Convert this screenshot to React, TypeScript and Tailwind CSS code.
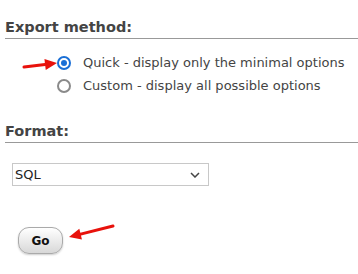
import React from "react";

const Arrow = ({ className, x1, y1, x2, y2 }: { className: string; x1: number; y1: number; x2: number; y2: number }) => {
  const ang = Math.atan2(y2 - y1, x2 - x1);
  const len = 12;
  const w = 5.5;
  const bx = x2 - Math.cos(ang) * len;
  const by = y2 - Math.sin(ang) * len;
  const px = -Math.sin(ang) * w;
  const py = Math.cos(ang) * w;
  return (
    <svg className={className} width="60" height="30" viewBox="0 0 60 30">
      <line x1={x1} y1={y1} x2={bx} y2={by} stroke="#e8120c" strokeWidth="3" strokeLinecap="round" />
      <polygon points={`${x2},${y2} ${bx + px},${by + py} ${bx - px},${by - py}`} fill="#e8120c" />
    </svg>
  );
};

export default function App() {
  return (
    <div className="relative h-[274px] w-[358px] bg-white text-[#444] [font-family:'DejaVu_Sans',sans-serif]">
      <div className="pl-[5px] pt-[18px]">
        <h3 className="border-b border-[#999] pb-[2px] text-[14.5px] font-bold leading-[18px]">Export method:</h3>
        <div className="mt-[17px] flex flex-col gap-[9px] pl-[52px] text-[13px] leading-[14px]">
          <label className="flex items-center gap-[12px]">
            <span className="flex h-[14px] w-[14px] items-center justify-center rounded-full border-2 border-[#1a6fd6]">
              <span className="h-[6px] w-[6px] rounded-full bg-[#1a6fd6]" />
            </span>
            <span>Quick - display only the minimal options</span>
          </label>
          <label className="flex items-center gap-[12px]">
            <span className="h-[14px] w-[14px] rounded-full border-2 border-[#8a8a8a]" />
            <span>Custom - display all possible options</span>
          </label>
        </div>
        <h3 className="mt-[29px] border-b border-[#999] pb-[2px] text-[14.5px] font-bold leading-[18px]">Format:</h3>
        <div className="mt-[20px] pl-[7px]">
          <div className="flex h-[23px] w-[197px] items-center justify-between border border-[#c8c8c8] bg-white pl-[2px] pr-[8px] text-[13px] text-[#222]">
            <span>SQL</span>
            <svg width="10" height="6" viewBox="0 0 10 6">
              <path d="M1 1 L5 5 L9 1" fill="none" stroke="#444" strokeWidth="1.5" />
            </svg>
          </div>
        </div>
        <div className="mt-[41px] pl-[13px]">
          <button className="h-[27px] w-[45px] rounded-[11px] border border-[#aaa] bg-gradient-to-b from-white to-[#d8d8d8] text-[12px] font-bold text-[#111] shadow-[0_1px_2px_rgba(0,0,0,0.2)]">
            Go
          </button>
        </div>
      </div>
      <Arrow className="absolute left-[20px] top-[50px]" x1={4} y1={17} x2={37} y2={13} />
      <Arrow className="absolute left-[64px] top-[221px]" x1={49} y1={5} x2={5} y2={16} />
    </div>
  );
}
